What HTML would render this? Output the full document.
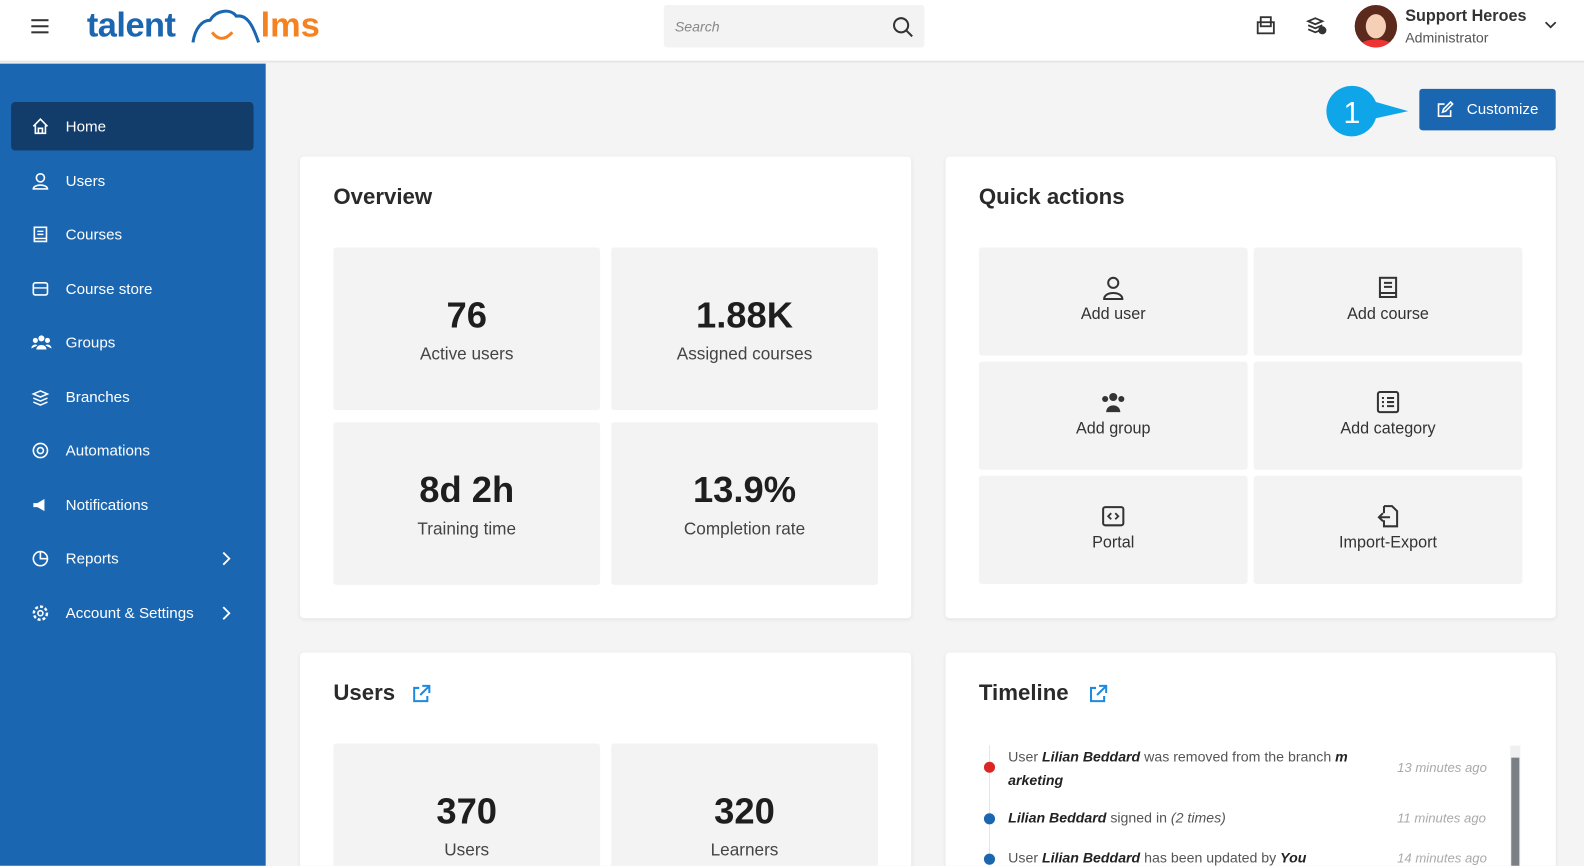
<!DOCTYPE html>
<html><head><meta charset="utf-8"><style>
*{box-sizing:border-box;margin:0;padding:0}
html,body{width:1584px;height:866px;overflow:hidden}
body{background:#f4f4f4;font-family:"Liberation Sans",sans-serif;color:#222;position:relative}
#w{position:absolute;left:0;top:0;width:1568px;height:857px;transform:scale(1.0102);transform-origin:0 0;overflow:hidden}
.hdr{position:absolute;left:0;top:0;width:1568px;height:62px;background:#fff;border-bottom:2px solid #e6e6e6}
.side{position:absolute;left:0;top:63px;width:263px;height:803px;background:#1b66b1}
.nav{position:absolute;left:11px;width:240px;height:48px;color:#fff;font-size:15px;display:flex;align-items:center;padding-left:54px}
.nav.act{background:#123d6b;border-radius:4px}
.nav svg{position:absolute;left:20px;top:15px}
.card{position:absolute;background:#fff;border-radius:4px;box-shadow:0 1px 4px rgba(0,0,0,.08)}
.card h2{position:absolute;left:33px;top:27px;font-size:22px;font-weight:bold;color:#2a2a2a}
.tile{position:absolute;background:#f3f3f3;border-radius:3px;text-align:center}
.big{font-size:36px;font-weight:bold;color:#1e1e1e;margin-top:46px}
.lbl{font-size:17px;color:#444;margin-top:8px}
.qa{position:absolute;background:#f3f3f3;border-radius:3px;text-align:center;font-size:16px;color:#333}
.qa svg{display:block;margin:28px auto 6px}
.tl{position:absolute;font-size:14px;color:#555}
.tl b{font-style:italic;color:#222}
.ago{position:absolute;left:447px;font-size:13px;font-style:italic;color:#aaa}
.dot{position:absolute;left:38px;width:11px;height:11px;border-radius:50%}
</style></head><body><div id="w">
<div class="hdr">
 <div style="position:absolute;left:31px;top:19px;width:17px;height:2px;background:#333;box-shadow:0 6px #333,0 12px #333"></div>
 <div style="position:absolute;left:86px;top:6px;font-size:34px;font-weight:bold;color:#1b66b1;letter-spacing:-0.5px">talent</div>
 <svg style="position:absolute;left:188px;top:6px" width="72" height="40"><path d="M3 36 C5 22 12 14 20 14 C26 4 40 2 46 10 C56 8 62 18 68 36" fill="none" stroke="#1b66b1" stroke-width="3"/><path d="M22 26 Q31 38 42 26" fill="none" stroke="#f58220" stroke-width="3"/></svg>
 <div style="position:absolute;left:258px;top:6px;font-size:34px;font-weight:bold;color:#f58220">lms</div>
 <div style="position:absolute;left:657px;top:5px;width:258px;height:42px;background:#f3f3f3;border-radius:3px;font-size:14px;font-style:italic;color:#888;padding:13px 11px">Search</div>
 <svg style="position:absolute;left:883px;top:16px" width="22" height="22"><circle cx="9" cy="9" r="7" fill="none" stroke="#333" stroke-width="2"/><path d="M14 14l6 6" stroke="#333" stroke-width="2"/></svg>
 <svg style="position:absolute;left:1243px;top:15px" width="20" height="20"><rect x="2" y="7" width="16" height="11" fill="none" stroke="#333" stroke-width="1.8"/><rect x="5" y="2" width="10" height="9" fill="none" stroke="#333" stroke-width="1.8"/></svg>
 <svg style="position:absolute;left:1292px;top:15px" width="22" height="20"><path d="M3 6l7-3 7 3-7 3zM3 10l7 3 7-3M3 14l7 3 5-2" fill="none" stroke="#333" stroke-width="1.8"/><circle cx="17" cy="15" r="4" fill="#333"/></svg>
 <div style="position:absolute;left:1341px;top:5px;width:42px;height:42px;border-radius:50%;background:#5b2a1c;overflow:hidden"><div style="position:absolute;left:11px;top:9px;width:20px;height:24px;border-radius:50%;background:#f5cfb6"></div><div style="position:absolute;left:6px;top:34px;width:30px;height:12px;border-radius:50%;background:#e33"></div></div>
 <div style="position:absolute;left:1391px;top:8px;font-size:16px;font-weight:bold;color:#333">Support Heroes</div>
 <div style="position:absolute;left:1391px;top:29px;font-size:14px;color:#555">Administrator</div>
 <svg style="position:absolute;left:1528px;top:20px" width="14" height="10"><path d="M2 2l5 5 5-5" fill="none" stroke="#333" stroke-width="1.8"/></svg>
</div>
<div class="side">
 <div class="nav act" style="top:38px"><svg width="18" height="18"><path d="M2 9L9 2l7 7M4 8v8h10V8M7 16v-5h4v5" fill="none" stroke="#fff" stroke-width="1.6"/></svg>Home</div>
 <div class="nav" style="top:92px"><svg width="18" height="18"><circle cx="9" cy="6" r="4" fill="none" stroke="#fff" stroke-width="1.6"/><path d="M2 17c0-5 14-5 14 0z" fill="none" stroke="#fff" stroke-width="1.6"/></svg>Users</div>
 <div class="nav" style="top:145px"><svg width="18" height="18"><rect x="3" y="2" width="12" height="14" fill="none" stroke="#fff" stroke-width="1.6"/><path d="M6 6h6M6 9h6M3 13h12" stroke="#fff" stroke-width="1.4"/></svg>Courses</div>
 <div class="nav" style="top:199px"><svg width="18" height="18"><rect x="2" y="3" width="14" height="12" rx="2" fill="none" stroke="#fff" stroke-width="1.6"/><path d="M2 8h14" stroke="#fff" stroke-width="1.4"/></svg>Course store</div>
 <div class="nav" style="top:252px"><svg width="20" height="18"><circle cx="10" cy="5" r="3" fill="#fff"/><circle cx="4" cy="7" r="2.5" fill="#fff"/><circle cx="16" cy="7" r="2.5" fill="#fff"/><path d="M5 16c0-6 10-6 10 0zM0 15c0-4 5-5 6-3M20 15c0-4-5-5-6-3" fill="#fff"/></svg>Groups</div>
 <div class="nav" style="top:306px"><svg width="18" height="18"><path d="M2 6l7-3 7 3-7 3zM2 10l7 3 7-3M2 14l7 3 7-3" fill="none" stroke="#fff" stroke-width="1.5"/></svg>Branches</div>
 <div class="nav" style="top:359px"><svg width="18" height="18"><circle cx="9" cy="9" r="7" fill="none" stroke="#fff" stroke-width="1.6"/><circle cx="9" cy="9" r="3" fill="none" stroke="#fff" stroke-width="1.6"/></svg>Automations</div>
 <div class="nav" style="top:413px"><svg width="18" height="18"><path d="M2 7h4l7-4v12l-7-4H2z" fill="#fff"/></svg>Notifications</div>
 <div class="nav" style="top:466px"><svg width="18" height="18"><circle cx="9" cy="9" r="7" fill="none" stroke="#fff" stroke-width="1.6"/><path d="M9 2v7h7" fill="none" stroke="#fff" stroke-width="1.6"/></svg>Reports<svg width="10" height="16" style="left:208px;top:16px"><path d="M2 2l6 6-6 6" fill="none" stroke="#fff" stroke-width="1.8"/></svg></div>
 <div class="nav" style="top:520px"><svg width="18" height="18"><circle cx="9" cy="9" r="6.5" fill="none" stroke="#fff" stroke-width="2.4" stroke-dasharray="3 2"/><circle cx="9" cy="9" r="2.5" fill="none" stroke="#fff" stroke-width="1.6"/></svg>Account &amp; Settings<svg width="10" height="16" style="left:208px;top:16px"><path d="M2 2l6 6-6 6" fill="none" stroke="#fff" stroke-width="1.8"/></svg></div>
</div>
<svg style="position:absolute;left:1312px;top:84px" width="84" height="52"><path d="M26 1 A25 25 0 1 0 50 33 L82 26 L50 17 A25 25 0 0 0 26 1z" fill="#0ea5e9"/><text x="18" y="38" font-family="Liberation Sans" font-size="30" fill="#fff">1</text></svg>
<div style="position:absolute;left:1405px;top:88px;width:135px;height:41px;background:#1b66b1;border-radius:3px;color:#fff;font-size:15px;padding:12px 0 0 47px">Customize</div>
<svg style="position:absolute;left:1421px;top:100px" width="18" height="18"><path d="M9 3H3v12h12V9M7 11l1-3 7-7 2 2-7 7z" fill="none" stroke="#fff" stroke-width="1.6"/></svg>

<div class="card" style="left:297px;top:155px;width:605px;height:457px"><h2>Overview</h2>
 <div class="tile" style="left:33px;top:90px;width:264px;height:161px"><div class="big">76</div><div class="lbl">Active users</div></div>
 <div class="tile" style="left:308px;top:90px;width:264px;height:161px"><div class="big">1.88K</div><div class="lbl">Assigned courses</div></div>
 <div class="tile" style="left:33px;top:263px;width:264px;height:161px"><div class="big">8d 2h</div><div class="lbl">Training time</div></div>
 <div class="tile" style="left:308px;top:263px;width:264px;height:161px"><div class="big">13.9%</div><div class="lbl">Completion rate</div></div>
</div>
<div class="card" style="left:936px;top:155px;width:604px;height:457px"><h2>Quick actions</h2>
 <div class="qa" style="left:33px;top:90px;width:266px;height:107px"><svg width="22" height="24"><circle cx="11" cy="7" r="5" fill="none" stroke="#333" stroke-width="2"/><path d="M2 23c0-8 18-8 18 0z" fill="none" stroke="#333" stroke-width="2"/></svg>Add user</div>
 <div class="qa" style="left:305px;top:90px;width:266px;height:107px"><svg width="22" height="24"><rect x="3" y="2" width="16" height="19" fill="none" stroke="#333" stroke-width="2"/><path d="M7 7h8M7 11h8M3 17h16" stroke="#333" stroke-width="2"/></svg>Add course</div>
 <div class="qa" style="left:33px;top:203px;width:266px;height:107px"><svg width="26" height="24"><circle cx="13" cy="7" r="4" fill="#333"/><circle cx="5" cy="9" r="3" fill="#333"/><circle cx="21" cy="9" r="3" fill="#333"/><path d="M6 22c0-9 14-9 14 0z" fill="#333"/></svg>Add group</div>
 <div class="qa" style="left:305px;top:203px;width:266px;height:107px"><svg width="24" height="24"><rect x="2" y="2" width="20" height="20" rx="2" fill="none" stroke="#333" stroke-width="2"/><path d="M6 8h2M6 12h2M6 16h2M11 8h7M11 12h7M11 16h7" stroke="#333" stroke-width="2"/></svg>Add category</div>
 <div class="qa" style="left:33px;top:316px;width:266px;height:107px"><svg width="24" height="24"><rect x="2" y="3" width="20" height="18" rx="2" fill="none" stroke="#333" stroke-width="2"/><path d="M10 9l-3 3 3 3M14 9l3 3-3 3" fill="none" stroke="#333" stroke-width="1.8"/></svg>Portal</div>
 <div class="qa" style="left:305px;top:316px;width:266px;height:107px"><svg width="24" height="24"><path d="M8 2h8l5 5v15H8v-6M8 9V2" fill="none" stroke="#333" stroke-width="2"/><path d="M14 13H3M7 9l-4 4 4 4" fill="none" stroke="#333" stroke-width="2"/></svg>Import-Export</div>
</div>
<div class="card" style="left:297px;top:646px;width:605px;height:230px"><h2>Users</h2>
 <svg style="position:absolute;left:110px;top:31px" width="20" height="20"><path d="M8 4H3v13h13v-5M11 2h7v7M18 2l-9 9" fill="none" stroke="#1b8ae0" stroke-width="2"/></svg>
 <div class="tile" style="left:33px;top:90px;width:264px;height:161px"><div class="big">370</div><div class="lbl">Users</div></div>
 <div class="tile" style="left:308px;top:90px;width:264px;height:161px"><div class="big">320</div><div class="lbl">Learners</div></div>
</div>
<div class="card" style="left:936px;top:646px;width:604px;height:230px"><h2>Timeline</h2>
 <svg style="position:absolute;left:141px;top:31px" width="20" height="20"><path d="M8 4H3v13h13v-5M11 2h7v7M18 2l-9 9" fill="none" stroke="#1b8ae0" stroke-width="2"/></svg>
 <div style="position:absolute;left:43px;top:92px;width:1px;height:130px;background:#e5e5e5"></div>
 <div class="dot" style="top:108px;background:#dc2626"></div>
 <div class="tl" style="left:62px;top:92px;width:370px;line-height:23px">User <b>Lilian Beddard</b> was removed from the branch <b>m arketing</b></div>
 <div class="ago" style="top:106px">13 minutes ago</div>
 <div class="dot" style="top:159px;background:#1b66b1"></div>
 <div class="tl" style="left:62px;top:155px"><b>Lilian Beddard</b> signed in <i>(2 times)</i></div>
 <div class="ago" style="top:156px">11 minutes ago</div>
 <div class="dot" style="top:199px;background:#1b66b1"></div>
 <div class="tl" style="left:62px;top:195px">User <b>Lilian Beddard</b> has been updated by <b>You</b></div>
 <div class="ago" style="top:196px">14 minutes ago</div>
 <div style="position:absolute;left:559px;top:92px;width:10px;height:130px;background:#f0f0f0"></div>
 <div style="position:absolute;left:560px;top:104px;width:8px;height:120px;background:#7a8086"></div>
</div>
</div></body></html>
